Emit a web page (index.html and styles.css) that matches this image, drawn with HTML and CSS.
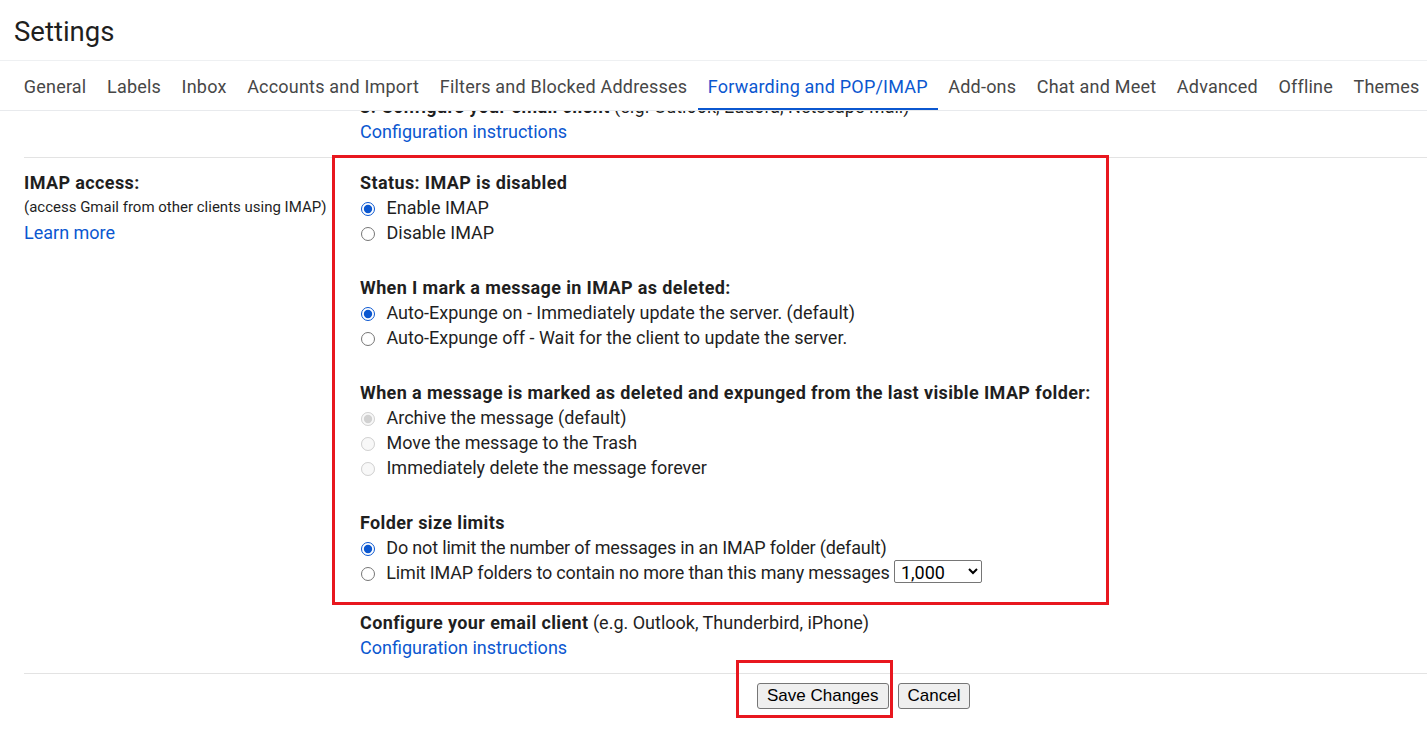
FILE: index.html
```html
<!DOCTYPE html>
<html lang="en">
<head>
<meta charset="utf-8">
<title>Settings</title>
<link rel="stylesheet" href="styles.css">
</head>
<body>
<div class="app">
  <header class="topbar"><h1 class="title">Settings</h1></header>
  <nav class="tabs">
    <a class="tab">General</a>
    <a class="tab">Labels</a>
    <a class="tab">Inbox</a>
    <a class="tab">Accounts and Import</a>
    <a class="tab">Filters and Blocked Addresses</a>
    <a class="tab active">Forwarding and POP/IMAP</a>
    <a class="tab">Add-ons</a>
    <a class="tab">Chat and Meet</a>
    <a class="tab">Advanced</a>
    <a class="tab">Offline</a>
    <a class="tab">Themes</a>
  </nav>
  <main class="scroll">
    <div class="inner">
      <div class="row row-top">
        <div class="label"></div>
        <div class="value">
          <div class="line"><b>3. Configure your email client</b> (e.g. Outlook, Eudora, Netscape Mail)</div>
          <div class="line"><a class="link" href="#">Configuration instructions</a></div>
        </div>
      </div>
      <div class="row">
        <div class="label">
          <div class="line"><b>IMAP access:</b></div>
          <div class="line small">(access Gmail from other clients using IMAP)</div>
          <div class="line"><a class="link" href="#">Learn more</a></div>
        </div>
        <div class="value">
          <div class="boxed">
            <section class="sec">
              <div class="line"><b>Status: IMAP is disabled</b></div>
              <label class="opt"><input type="radio" name="imap" checked> Enable IMAP</label>
              <label class="opt"><input type="radio" name="imap"> Disable IMAP</label>
            </section>
            <section class="sec">
              <div class="line"><b>When I mark a message in IMAP as deleted:</b></div>
              <label class="opt"><input type="radio" name="exp" checked> Auto-Expunge on - Immediately update the server. (default)</label>
              <label class="opt"><input type="radio" name="exp"> Auto-Expunge off - Wait for the client to update the server.</label>
            </section>
            <section class="sec">
              <div class="line"><b>When a message is marked as deleted and expunged from the last visible IMAP folder:</b></div>
              <label class="opt"><input type="radio" name="del" checked disabled> Archive the message (default)</label>
              <label class="opt"><input type="radio" name="del" disabled> Move the message to the Trash</label>
              <label class="opt"><input type="radio" name="del" disabled> Immediately delete the message forever</label>
            </section>
            <section class="sec">
              <div class="line"><b>Folder size limits</b></div>
              <label class="opt tight"><input type="radio" name="lim" checked> Do not limit the number of messages in an IMAP folder (default)</label>
              <label class="opt tight"><input type="radio" name="lim"> Limit IMAP folders to contain no more than this many messages <select class="sel"><option>1,000</option><option>2,000</option><option>5,000</option><option>10,000</option></select></label>
            </section>
          </div>
          <section class="sec sec-last">
            <div class="line"><b>Configure your email client</b> (e.g. Outlook, Thunderbird, iPhone)</div>
            <div class="line"><a class="link" href="#">Configuration instructions</a></div>
          </section>
        </div>
      </div>
      <div class="actions">
        <span class="save-wrap"><button class="btn">Save Changes</button></span>
        <button class="btn">Cancel</button>
      </div>
    </div>
  </main>
</div>
</body>
</html>
```
FILE: styles.css
```css
html, body {
  margin: 0;
  padding: 0;
  background: #ffffff;
}
body {
  font-family: Roboto, "Liberation Sans", Arial, sans-serif;
  color: #1f1f1f;
  overflow: hidden;
}
.app {
  width: 1427px;
  height: 744px;
  display: flex;
  flex-direction: column;
}
.topbar {
  height: 60px;
  flex: none;
  box-shadow: 0 1px 2px rgba(0,0,0,0.08);
  border-bottom: 1px solid #eef0f2;
  display: flex;
  align-items: center;
}
.title {
  margin: 0 0 0 14px;
  font-weight: 400;
  font-size: 27.5px;
  color: #1f1f1f;
  position: relative;
  top: 1px;
}
.tabs {
  flex: none;
  height: 49px;
  display: flex;
  padding-left: 13.5px;
  border-bottom: 1px solid #e8eaed;
  white-space: nowrap;
  overflow: hidden;
  position: relative;
  z-index: 2;
  background: #fff;
}
.tab {
  font-size: 18px;
  letter-spacing: 0.2px;
  color: #474747;
  padding: 4px 10.3px 0;
  display: flex;
  align-items: center;
  border-bottom: 3px solid transparent;
  margin-bottom: -1px;
  cursor: pointer;
  line-height: 1;
}
.tab.active {
  color: #0b57d0;
  border-bottom-color: #0b57d0;
}
.scroll {
  flex: 1;
  overflow: hidden;
}
.inner {
  margin-top: -17px;
}
.row {
  display: flex;
  margin-left: 24px;
  padding: 12px 0 13px;
  border-bottom: 1px solid #e3e3e3;
}
.row-top {
  padding-top: 0;
}
.label {
  width: 336px;
  flex: none;
}
.value {
  flex: 1;
}
.line, .opt {
  display: block;
  line-height: 25px;
  font-size: 18px;
  white-space: nowrap;
}
.opt.tight {
  letter-spacing: -0.17px;
}
.line b {
  font-weight: 700;
  letter-spacing: 0.38px;
}
.small {
  font-size: 15px;
}
.link {
  color: #0b57d0;
  text-decoration: none;
}
.boxed {
  position: relative;
}
.boxed::after {
  content: "";
  position: absolute;
  left: -28px;
  top: -15px;
  width: 771px;
  bottom: -20px;
  border: 3px solid #e8171f;
  pointer-events: none;
}
.sec + .sec {
  margin-top: 30px;
}
.sec-last {
  margin-top: 25px;
}
.opt input {
  margin: 0 7px 0 1px;
  width: 14px;
  height: 14px;
  vertical-align: -2px;
  accent-color: #0b57d0;
}
.sel {
  font-family: Roboto, "Liberation Sans", Arial, sans-serif;
  font-size: 18px;
  letter-spacing: 0;
  height: 23px;
  width: 88px;
  padding: 0 2px;
  border: 1px solid #767676;
  border-radius: 2px;
  background: #fff;
  color: #000;
  vertical-align: 0;
}
.actions {
  padding: 9px 0 0 757px;
  display: flex;
  gap: 9px;
}
.save-wrap {
  position: relative;
  display: inline-block;
}
.save-wrap::after {
  content: "";
  position: absolute;
  left: -21px;
  top: -23px;
  width: 151px;
  height: 52px;
  border: 3px solid #e8171f;
  pointer-events: none;
}
.btn {
  font-family: "Liberation Sans", Arial, sans-serif;
  font-size: 17px;
  height: 26px;
  padding: 0 9px;
  background: #efefef;
  border: 1px solid #767676;
  border-radius: 3px;
  color: #000;
}
```
